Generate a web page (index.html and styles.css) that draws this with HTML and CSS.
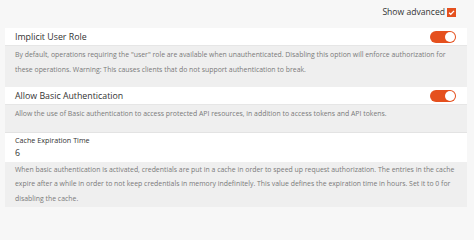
FILE: index.html
```html
<!DOCTYPE html>
<html>
<head>
<meta charset="utf-8">
<link rel="stylesheet" href="styles.css">
</head>
<body>
<div class="header">
  <label class="adv">Show advanced <span class="check"><svg viewBox="0 0 10 10" width="9" height="9"><path d="M2.3 5.2 L4.2 7 L7.8 3.2" fill="none" stroke="#fff" stroke-width="1.4"/></svg></span></label>
</div>
<div class="panel">
  <div class="row">
    <span class="title">Implicit User Role</span>
    <span class="toggle"><span class="knob"></span></span>
  </div>
  <div class="desc">By default, operations requiring the "user" role are available when unauthenticated. Disabling this option will enforce authorization for these operations. Warning: This causes clients that do not support authentication to break.</div>
  <div class="row">
    <span class="title">Allow Basic Authentication</span>
    <span class="toggle"><span class="knob"></span></span>
  </div>
  <div class="desc">Allow the use of Basic authentication to access protected API resources, in addition to access tokens and API tokens.</div>
  <div class="field">
    <div class="field-label">Cache Expiration Time</div>
    <div class="field-value">6</div>
  </div>
  <div class="desc last">When basic authentication is activated, credentials are put in a cache in order to speed up request authorization. The entries in the cache expire after a while in order to not keep credentials in memory indefinitely. This value defines the expiration time in hours. Set it to 0 for disabling the cache.</div>
</div>
</body>
</html>
```
FILE: styles.css
```css
html, body {
  margin: 0;
  padding: 0;
}
body {
  background: #f7f7f7;
  font-family: "Open Sans", "Noto Sans", sans-serif;
  color: #333;
  width: 474px;
  height: 207px;
  overflow: hidden;
}
.header {
  height: 28px;
  display: flex;
  justify-content: flex-end;
  align-items: center;
  padding-right: 18px;
  box-sizing: border-box;
}
.adv {
  display: flex;
  align-items: center;
  gap: 2px;
  font-size: 8.6px;
  color: #333;
  margin-top: -4px;
}
.check {
  width: 9px;
  height: 9px;
  background: #e5501e;
  display: flex;
  align-items: center;
  justify-content: center;
}
.check svg { display: block; }
.panel {
  margin: 0 7px 0 5px;
  background: #efefef;
}
.row {
  height: 18px;
  background: #fff;
  display: flex;
  align-items: center;
  justify-content: space-between;
  padding: 0 11px 0 10px;
  border-bottom: 1px solid #e6e6e6;
  box-sizing: border-box;
}
.title {
  font-size: 8.8px;
  color: #333;
}
.toggle {
  width: 26px;
  height: 12px;
  border-radius: 6px;
  background: #e5501e;
  display: flex;
  align-items: center;
  justify-content: flex-end;
  padding: 0 1px;
  box-sizing: border-box;
}
.knob {
  width: 10px;
  height: 10px;
  border-radius: 50%;
  background: #fff;
}
.desc {
  font-size: 6.9px;
  line-height: 14.5px;
  color: #7a7a7a;
  padding: 2px 8px 10px 10px;
}
.desc.last {
  padding: 1px 8px 1px 10px;
}
.field {
  height: 30px;
  background: #fff;
  border-top: 1px solid #e3e3e3;
  padding: 2px 10px 0;
  box-sizing: border-box;
}
.field-label {
  font-size: 7.2px;
  line-height: 11px;
  color: #333;
}
.field-value {
  font-size: 8.8px;
  line-height: 14px;
  color: #333;
}
```
